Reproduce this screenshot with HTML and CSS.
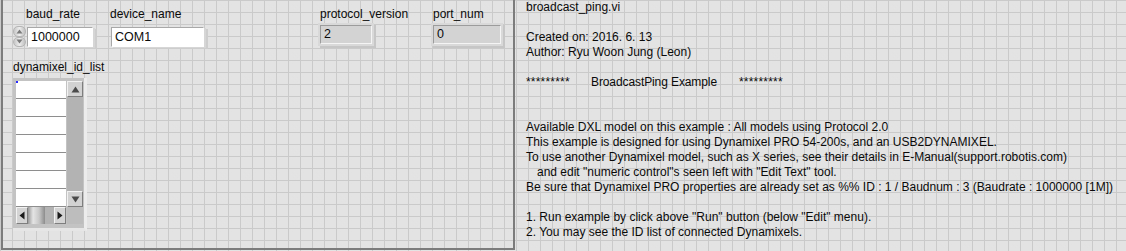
FILE: index.html
```html
<!DOCTYPE html>
<html>
<head>
<meta charset="utf-8">
<link rel="stylesheet" href="styles.css">
</head>
<body>
<div class="screen">
  <section class="panel">
    <div class="controls">
      <div class="ctl ctl-baud">
        <div class="label label-baud">baud_rate</div>
        <div class="numeric">
          <div class="spin">
            <span class="spin-btn"><svg width="7" height="5" viewBox="0 0 7 5"><path d="M3.5 0.5 L6.5 4.5 L0.5 4.5 Z" fill="#7a7a7a"/></svg></span>
            <span class="spin-btn"><svg width="7" height="5" viewBox="0 0 7 5"><path d="M0.5 0.5 L6.5 0.5 L3.5 4.5 Z" fill="#7a7a7a"/></svg></span>
          </div>
          <div class="field field-baud">1000000</div>
        </div>
      </div>
      <div class="ctl ctl-device">
        <div class="label">device_name</div>
        <div class="field field-device">COM1</div>
      </div>
      <div class="ctl ctl-proto">
        <div class="label">protocol_version</div>
        <div class="ind ind-proto">2</div>
      </div>
      <div class="ctl ctl-port">
        <div class="label">port_num</div>
        <div class="ind ind-port">0</div>
      </div>
    </div>
    <div class="array-ctl">
      <div class="label">dynamixel_id_list</div>
      <div class="array">
        <div class="cells">
          <div class="cell cell-first"></div>
          <div class="cell"></div>
          <div class="cell"></div>
          <div class="cell"></div>
          <div class="cell"></div>
          <div class="cell"></div>
          <div class="cell"></div>
        </div>
        <div class="vscroll">
          <span class="sbtn"><svg width="9" height="7" viewBox="0 0 9 7"><path d="M4.5 0.5 L8.5 6.5 L0.5 6.5 Z" fill="#4a4a4a"/></svg></span>
          <span class="sbtn"><svg width="9" height="7" viewBox="0 0 9 7"><path d="M0.5 0.5 L8.5 0.5 L4.5 6.5 Z" fill="#4a4a4a"/></svg></span>
        </div>
        <div class="hscroll">
          <span class="hbtn"><svg width="6" height="9" viewBox="0 0 6 9"><path d="M0.5 4.5 L5.5 0.5 L5.5 8.5 Z" fill="#1a1a1a"/></svg></span>
          <span class="thumb"></span>
          <span class="track"></span>
          <span class="hbtn"><svg width="6" height="9" viewBox="0 0 6 9"><path d="M5.5 4.5 L0.5 0.5 L0.5 8.5 Z" fill="#1a1a1a"/></svg></span>
        </div>
        <div class="corner"></div>
      </div>
    </div>
  </section>
  <section class="notes">
    <p>broadcast_ping.vi</p>
    <p>&nbsp;</p>
    <p>Created on: 2016. 6. 13</p>
    <p>Author: Ryu Woon Jung (Leon)</p>
    <p>&nbsp;</p>
    <p><span class="stars">*********</span><span class="title">BroadcastPing Example</span><span class="stars stars-r">*********</span></p>
    <p>&nbsp;</p>
    <p>&nbsp;</p>
    <p>Available DXL model on this example : All models using Protocol 2.0</p>
    <p>This example is designed for using Dynamixel PRO 54-200s, and an USB2DYNAMIXEL.</p>
    <p>To use another Dynamixel model, such as X series, see their details in E-Manual(support.robotis.com)</p>
    <p class="indent">and edit "numeric control"s seen left with "Edit Text" tool.</p>
    <p>Be sure that Dynamixel PRO properties are already set as %% ID : 1 / Baudnum : 3 (Baudrate : 1000000 [1M])</p>
    <p>&nbsp;</p>
    <p>1. Run example by click above "Run" button (below "Edit" menu).</p>
    <p>2. You may see the ID list of connected Dynamixels.</p>
  </section>
</div>
</body>
</html>
```
FILE: styles.css
```css
html, body {
  margin: 0;
  padding: 0;
}
body {
  width: 1126px;
  height: 251px;
  overflow: hidden;
  background-color: #e3e3e3;
  background-image:
    linear-gradient(to right, #cacaca 1px, transparent 1px),
    linear-gradient(to bottom, #cacaca 1px, transparent 1px);
  background-size: 12px 12px;
  font-family: "Liberation Sans", Arial, sans-serif;
  font-size: 12px;
  color: #0a0a0a;
}
.screen {
  display: flex;
  align-items: flex-start;
}
.panel {
  box-sizing: border-box;
  width: 514px;
  height: 250px;
  margin-left: 1px;
  border-left: 2px solid #7c7c7c;
  border-right: 2px solid #7c7c7c;
  border-bottom: 2px solid #7c7c7c;
  display: flex;
  flex-direction: column;
}
.controls {
  display: flex;
  padding-top: 7px;
}
.ctl {
  display: flex;
  flex-direction: column;
}
.label {
  line-height: 15px;
  height: 15px;
  white-space: nowrap;
}
.ctl-baud { margin-left: 10px; width: 97px; }
.label-baud { padding-left: 13px; }
.ctl-device { width: 210px; }
.ctl-proto { width: 113px; }
.ctl-port { flex: 1; }

.numeric {
  display: flex;
  margin-top: 4px;
}
.spin {
  display: flex;
  flex-direction: column;
  width: 13px;
  height: 21px;
  margin-right: 1px;
}
.spin-btn {
  flex: 1;
  display: flex;
  align-items: center;
  justify-content: center;
  background: linear-gradient(to right, #c8c8c8, #ececec 50%, #c0c0c0);
  border-radius: 5px;
  border: 1px solid #b5b5b5;
}
.field {
  box-sizing: border-box;
  height: 20px;
  line-height: 18px;
  padding-left: 3px;
  background: #fff;
  border: 1px solid;
  border-color: #a8a8a8 #ffffff #ffffff #a8a8a8;
  box-shadow: 2px 1px 0 #d6d6d6, 4px 2px 0 #cdcdcd;
  font-size: 12.5px;
}
.field-baud { width: 66px; margin-top: 1px; }
.field-device { width: 93px; margin-top: 5px; margin-left: 1px; }

.ind {
  box-sizing: border-box;
  height: 19px;
  margin-top: 3px;
  line-height: 17px;
  padding-left: 3px;
  background: #d3d3d3;
  border: 1px solid;
  border-color: #9c9c9c #f4f4f4 #f4f4f4 #9c9c9c;
  box-shadow: 0 0 0 2px #d9d9d9, 2px 2px 0 2px #c6c6c6;
  font-size: 12.5px;
}
.ind-proto { width: 52px; }
.ind-port { width: 68px; }

.array-ctl {
  margin-top: 13px;
  margin-left: 10px;
  display: flex;
  flex-direction: column;
}
.array {
  margin-top: 3px;
  width: 74px;
  box-sizing: border-box;
  padding: 3px 4px 4px 3px;
  background: #c3c3c3;
  border-right: 3px solid #ececec;
  border-bottom: 3px solid #e6e6e6;
  display: grid;
  grid-template-columns: 51px 16px;
  grid-template-rows: 126px 17px;
}
.cells {
  display: flex;
  flex-direction: column;
}
.cell {
  height: 18px;
  box-sizing: border-box;
  width: 50px;
  background: #fff;
  border-bottom: 1px solid #8e8e8e;
}
.cell-first {
  position: relative;
}
.cell-first::before {
  content: "";
  position: absolute;
  left: 0;
  top: 0;
  width: 2px;
  height: 2px;
  background: #2a2aff;
}
.vscroll {
  background: #b3b3b3;
  display: flex;
  flex-direction: column;
  justify-content: space-between;
}
.sbtn {
  box-sizing: border-box;
  width: 16px;
  height: 16px;
  display: flex;
  align-items: center;
  justify-content: center;
  background: #d2d2d2;
  border: 1px solid;
  border-color: #f2f2f2 #7e7e7e #7e7e7e #f2f2f2;
}
.hscroll {
  display: flex;
  background: #b3b3b3;
  width: 50px;
}
.hbtn {
  box-sizing: border-box;
  width: 12px;
  height: 17px;
  display: flex;
  align-items: center;
  justify-content: center;
  background: #d4d4d4;
  border: 1px solid;
  border-color: #f2f2f2 #7e7e7e #7e7e7e #f2f2f2;
}
.thumb {
  width: 17px;
  height: 17px;
  background: linear-gradient(to right, #9a9a9a, #e4e4e4 30%, #c8c8c8 65%, #8c8c8c);
}
.track {
  flex: 1;
}
.corner {
  background: #bdbdbd;
}

.notes {
  margin-left: 11px;
  line-height: 15px;
  white-space: nowrap;
}
.notes p {
  margin: 0;
  height: 15px;
}
.indent {
  padding-left: 11px;
}
.stars {
  display: inline-block;
  width: 65px;
  font-size: 12px;
  letter-spacing: 0.2px;
}
.stars-r {
  width: auto;
  margin-left: 22px;
}
.title {
  display: inline-block;
  letter-spacing: -0.1px;
}
```
